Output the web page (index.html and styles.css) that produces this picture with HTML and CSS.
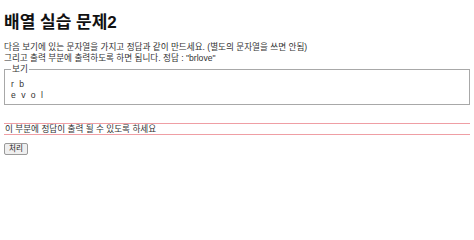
FILE: index.html
```html
<!DOCTYPE html>
<html lang="ko">
<head>
<meta charset="utf-8">
<title>배열 실습 문제2</title>
<link rel="stylesheet" href="styles.css">
</head>
<body>
<h1 class="title">배열 실습 문제2</h1>
<p class="desc">다음 보기에 있는 문자열을 가지고 정답과 같이 만드세요. (별도의 문자열을 쓰면 안됨)<br>그리고 출력 부분에 출력하도록 하면 됩니다. 정답 : "brlove"</p>
<fieldset class="example">
<legend class="example-legend">보기</legend>
<div class="example-line">r b</div>
<div class="example-line">e v o l</div>
</fieldset>
<div class="output">이 부분에 정답이 출력 될 수 있도록 하세요</div>
<button class="run-btn" type="button">처리</button>
</body>
</html>
```

FILE: styles.css
```css
html, body {
  background: #ffffff;
}
body {
  margin: 4px;
  font-family: "Liberation Sans", "Noto Sans CJK KR", sans-serif;
  font-size: 8.6px;
  color: #222;
}
.title {
  font-size: 17px;
  font-weight: bold;
  margin: 8px 0 9px;
  line-height: 21px;
  color: #111;
}
.desc {
  margin: 0;
  line-height: 10.5px;
  color: #333;
}
.example {
  margin: 1px 0 0;
  padding: 5px 6px 4px;
  border: 1px solid #a8a8a8;
  line-height: 10.5px;
}
.example-legend {
  padding: 0 1px;
  color: #333;
  line-height: 10px;
}
.example-line {
  letter-spacing: 1.5px;
  color: #333;
}
.output {
  margin: 18px -1px 0;
  border: 1px solid #ef9ea4;
  line-height: 10px;
  padding: 0 1px;
  color: #333;
}
.run-btn {
  display: block;
  margin-top: 8px;
  font-family: "Liberation Sans", "Noto Sans CJK KR", sans-serif;
  font-size: 7.5px;
  padding: 1px 4px;
  line-height: 8px;
  background: #efefef;
  border: 1px solid #9a9a9a;
  border-radius: 2px;
  color: #222;
}
```
